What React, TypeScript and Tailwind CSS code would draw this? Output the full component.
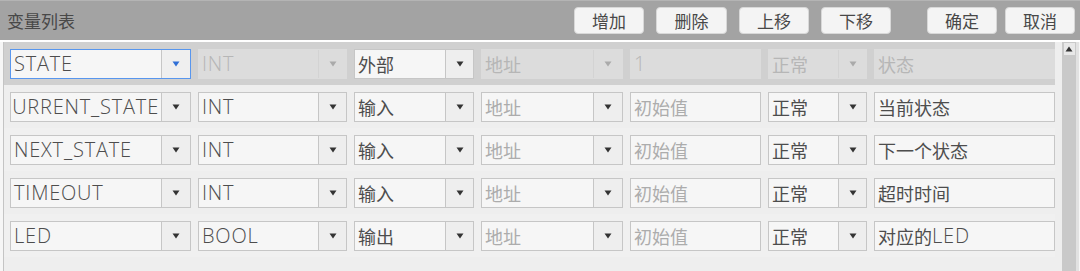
import React from "react";

const FONT = { fontFamily: '"Noto Sans CJK SC", "Noto Sans", sans-serif' };

function Txt({ text }: { text: string }) {
  const parts = text.match(/[\x00-\x7f]+|[^\x00-\x7f]+/g) || [];
  return (
    <>
      {parts.map((p, i) =>
        /^[\x00-\x7f]+$/.test(p) ? (
          <span key={i} className="font-['Open_Sans',sans-serif] font-light text-[20px] tracking-[0.8px]">
            {p}
          </span>
        ) : (
          <span key={i} className="text-[18px]">
            {p}
          </span>
        )
      )}
    </>
  );
}

const W = {
  c1: "w-[181px]",
  c2: "w-[149px]",
  c3: "w-[120px]",
  c4: "w-[142px]",
  c5: "w-[131px]",
  c6: "w-[99px]",
  c7: "w-[181px]",
};

function Arrow({ color }: { color: string }) {
  return (
    <svg width="8" height="6" viewBox="0 0 8 6">
      <path d="M0.5 0.5 L7.5 0.5 L4 5.5 Z" fill={color} />
    </svg>
  );
}

function Combo({
  w,
  text,
  placeholder,
  alignEnd,
  disabled,
  focused,
  btnW,
}: {
  w: string;
  text: string;
  placeholder?: boolean;
  alignEnd?: boolean;
  disabled?: boolean;
  focused?: boolean;
  btnW: string;
}) {
  const border = focused
    ? "border-[#5896ee] bg-[#f6f6f6]"
    : disabled
    ? "border-[#dcdcdc] bg-[#dcdcdc]"
    : "border-[#c6c6c6] bg-[#f6f6f6]";
  const textColor = disabled ? "text-[#b6b6b6]" : placeholder ? "text-[#acacac]" : "text-[#4d4d4d]";
  return (
    <div className={`${w} h-[30px] flex border ${border} shrink-0`}>
      <div
        className={`flex-1 min-w-0 overflow-hidden whitespace-nowrap flex items-center pl-[3px] ${
          alignEnd ? "justify-end pr-[2px]" : ""
        } ${textColor} leading-none`}
      >
        <Txt text={text} />
      </div>
      <div
        className={`${btnW} shrink-0 flex items-center justify-center border-l ${
          focused
            ? "border-[#c6c6c6] bg-[#efefef]"
            : disabled
            ? "border-[#d3d3d3] bg-[#dcdcdc]"
            : "border-[#c6c6c6] bg-[#eeeeee]"
        }`}
      >
        <Arrow color={focused ? "#2f6fd6" : disabled ? "#aaaaaa" : "#333333"} />
      </div>
    </div>
  );
}

function Input({
  w,
  text,
  placeholder,
  disabled,
}: {
  w: string;
  text: string;
  placeholder?: boolean;
  disabled?: boolean;
}) {
  const border = disabled ? "border-[#dcdcdc] bg-[#dcdcdc]" : "border-[#c6c6c6] bg-[#f6f6f6]";
  const textColor = disabled ? "text-[#b6b6b6]" : placeholder ? "text-[#acacac]" : "text-[#4d4d4d]";
  return (
    <div
      className={`${w} h-[30px] flex items-center border ${border} pl-[3px] ${textColor} leading-none whitespace-nowrap overflow-hidden shrink-0`}
    >
      <Txt text={text} />
    </div>
  );
}

const rows = [
  { name: "CURRENT_STATE", type: "INT", dir: "输入", desc: "当前状态" },
  { name: "NEXT_STATE", type: "INT", dir: "输入", desc: "下一个状态" },
  { name: "TIMEOUT", type: "INT", dir: "输入", desc: "超时时间" },
  { name: "LED", type: "BOOL", dir: "输出", desc: "对应的LED" },
];

function Btn({ label, w }: { label: string; w: string }) {
  return (
    <button
      className={`${w} h-[27px] rounded-[4px] bg-[#f4f4f4] border border-[#d8d8d8] text-[17px] text-[#484848] flex items-center justify-center leading-none`}
    >
      {label}
    </button>
  );
}

export default function App() {
  return (
    <div className="w-[1080px] h-[271px] bg-white flex flex-col overflow-hidden" style={FONT}>
      <div className="h-[40px] shrink-0 bg-[#a3a3a3] border-t border-[#b4b4b4] flex items-center pl-[7px] pr-[5px]">
        <div className="text-[17px] text-[#484848] leading-none">变量列表</div>
        <div className="flex-1" />
        <div className="flex items-center gap-[12px]">
          <Btn label="增加" w="w-[70px]" />
          <Btn label="删除" w="w-[71px]" />
          <Btn label="上移" w="w-[70px]" />
          <Btn label="下移" w="w-[70px]" />
        </div>
        <div className="flex items-center gap-[8px] ml-[36px]">
          <Btn label="确定" w="w-[70px]" />
          <Btn label="取消" w="w-[70px]" />
        </div>
      </div>
      <div className="h-[2px] shrink-0 bg-white" />
      <div className="flex-1 flex pl-[3px] pr-[2px] bg-[#f6f6f6]">
        <div className="flex-1 flex flex-col border-l border-[#c4c4c4] bg-[#eeeeee]">
          <div className="h-[43px] shrink-0 bg-[#d0d0d0] flex items-start pt-[7px] pl-[6px] gap-[7px]">
            <Combo w={W.c1} text="STATE" focused btnW="w-[29px]" />
            <Combo w={W.c2} text="INT" disabled btnW="w-[28px]" />
            <Combo w={W.c3} text="外部" btnW="w-[28px]" />
            <Combo w={W.c4} text="地址" disabled btnW="w-[29px]" />
            <Input w={W.c5} text="1" disabled />
            <Combo w={W.c6} text="正常" disabled btnW="w-[28px]" />
            <Input w={W.c7} text="状态" disabled />
          </div>
          {rows.map((r, i) => (
            <div
              key={r.name}
              className={`h-[43px] shrink-0 flex items-start pt-[7px] pl-[6px] gap-[7px] ${
                i % 2 === 0 ? "bg-[#eeeeee]" : "bg-[#f0f0f0]"
              }`}
            >
              <Combo w={W.c1} text={r.name} alignEnd={i === 0} btnW="w-[29px]" />
              <Combo w={W.c2} text={r.type} btnW="w-[28px]" />
              <Combo w={W.c3} text={r.dir} btnW="w-[28px]" />
              <Combo w={W.c4} text="地址" placeholder btnW="w-[29px]" />
              <Input w={W.c5} text="初始值" placeholder />
              <Combo w={W.c6} text="正常" btnW="w-[28px]" />
              <Input w={W.c7} text={r.desc} />
            </div>
          ))}
          <div className="flex-1" />
        </div>
        <div className="w-[7px] shrink-0 bg-[#eeeeee]" />
        <div className="w-[14px] shrink-0 bg-[#c9c9c9] flex flex-col items-center pt-[1px]">
          <div className="w-[11px] h-[12px] bg-[#e8e8e8] flex items-center justify-center">
            <svg width="8" height="6" viewBox="0 0 8 6">
              <path d="M0.5 5.5 L7.5 5.5 L4 0.5 Z" fill="#333" />
            </svg>
          </div>
        </div>
        <div className="w-[3px] shrink-0 bg-[#e2e2e2]" />
      </div>
    </div>
  );
}
